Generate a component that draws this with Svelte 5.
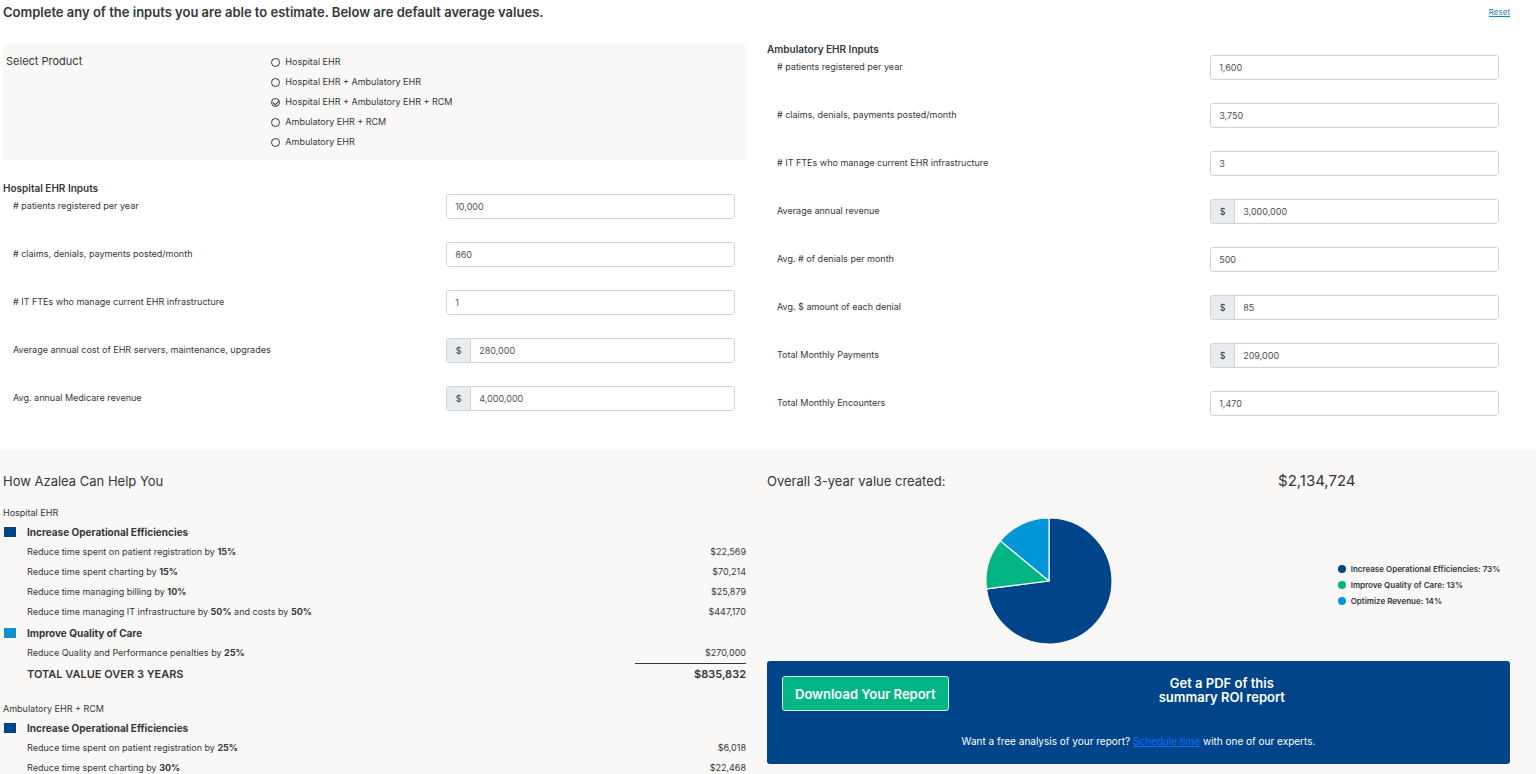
<script lang="ts">
	const products = [
		'Hospital EHR',
		'Hospital EHR + Ambulatory EHR',
		'Hospital EHR + Ambulatory EHR + RCM',
		'Ambulatory EHR + RCM',
		'Ambulatory EHR',
	];
	let product = $state(products[2]);

	const defaultHospital = [
		{ id: 'h-patients', label: '# patients registered per year', value: '10,000', money: false },
		{ id: 'h-claims', label: '# claims, denials, payments posted/month', value: '860', money: false },
		{ id: 'h-ftes', label: '# IT FTEs who manage current EHR infrastructure', value: '1', money: false },
		{ id: 'h-servers', label: 'Average annual cost of EHR servers, maintenance, upgrades', value: '280,000', money: true },
		{ id: 'h-medicare', label: 'Avg. annual Medicare revenue', value: '4,000,000', money: true },
	];
	const defaultAmbulatory = [
		{ id: 'a-patients', label: '# patients registered per year', value: '1,600', money: false },
		{ id: 'a-claims', label: '# claims, denials, payments posted/month', value: '3,750', money: false },
		{ id: 'a-ftes', label: '# IT FTEs who manage current EHR infrastructure', value: '3', money: false },
		{ id: 'a-revenue', label: 'Average annual revenue', value: '3,000,000', money: true },
		{ id: 'a-denials', label: 'Avg. # of denials per month', value: '500', money: false },
		{ id: 'a-denial-amount', label: 'Avg. $ amount of each denial', value: '85', money: true },
		{ id: 'a-payments', label: 'Total Monthly Payments', value: '209,000', money: true },
		{ id: 'a-encounters', label: 'Total Monthly Encounters', value: '1,470', money: false },
	];
	let hospital = $state(defaultHospital.map((f) => ({ ...f })));
	let ambulatory = $state(defaultAmbulatory.map((f) => ({ ...f })));

	function reset(e: Event) {
		e.preventDefault();
		product = products[2];
		hospital = defaultHospital.map((f) => ({ ...f }));
		ambulatory = defaultAmbulatory.map((f) => ({ ...f }));
	}

	// odd entries of `text` are the highlighted percentages
	const results = [
		{
			name: 'Hospital EHR',
			total: '$835,832',
			goals: [
				{
					name: 'Increase Operational Efficiencies', tone: 'navy',
					items: [
						{ text: ['Reduce time spent on patient registration by ', '15%'], amount: '$22,569' },
						{ text: ['Reduce time spent charting by ', '15%'], amount: '$70,214' },
						{ text: ['Reduce time managing billing by ', '10%'], amount: '$25,879' },
						{ text: ['Reduce time managing IT infrastructure by ', '50%', ' and costs by ', '50%'], amount: '$447,170' },
					],
				},
				{
					name: 'Improve Quality of Care', tone: 'sky',
					items: [
						{ text: ['Reduce Quality and Performance penalties by ', '25%'], amount: '$270,000' },
					],
				},
			],
		},
		{
			name: 'Ambulatory EHR + RCM',
			total: '',
			goals: [
				{
					name: 'Increase Operational Efficiencies', tone: 'navy',
					items: [
						{ text: ['Reduce time spent on patient registration by ', '25%'], amount: '$6,018' },
						{ text: ['Reduce time spent charting by ', '30%'], amount: '$22,468' },
					],
				},
			],
		},
	];

	const shares = [
		{ name: 'Increase Operational Efficiencies', pct: 73, color: '#004489' },
		{ name: 'Improve Quality of Care', pct: 13, color: '#02b684' },
		{ name: 'Optimize Revenue', pct: 14, color: '#0096d8' },
	];

	function point(pct: number) {
		const a = (pct / 100) * 2 * Math.PI;
		return `${64 + 63 * Math.sin(a)} ${64 - 63 * Math.cos(a)}`;
	}

	const slices = shares.map((s, i) => {
		const start = shares.slice(0, i).reduce((sum, x) => sum + x.pct, 0);
		const large = s.pct > 50 ? 1 : 0;
		return { color: s.color, d: `M64 64 L${point(start)} A63 63 0 ${large} 1 ${point(start + s.pct)} Z` };
	});
</script>

{#snippet field(f: any)}
	<div class="field">
		<label for={f.id}>{f.label}</label>
		<div class="control">
			{#if f.money}<span class="addon">$</span>{/if}
			<input id={f.id} type="text" bind:value={f.value} />
		</div>
	</div>
{/snippet}

<div class="roi">
	<header class="wrap">
		<h1>Complete any of the inputs you are able to estimate. Below are default average values.</h1>
		<a href="#reset" onclick={reset}>Reset</a>
	</header>

	<section class="wrap cols inputs">
		<div>
			<fieldset class="product" aria-labelledby="product-title">
				<div id="product-title" class="product-title">Select Product</div>
				<div class="options">
					{#each products as p (p)}
						<label><input type="radio" name="product" value={p} bind:group={product} />{p}</label>
					{/each}
				</div>
			</fieldset>
			<h2>Hospital EHR Inputs</h2>
			{#each hospital as f (f.id)}{@render field(f)}{/each}
		</div>
		<div>
			<h2>Ambulatory EHR Inputs</h2>
			{#each ambulatory as f (f.id)}{@render field(f)}{/each}
		</div>
	</section>

	<section class="summary">
		<div class="wrap cols">
			<div>
				<h3>How Azalea Can Help You</h3>
				{#each results as group (group.name)}
					<table>
						<caption>{group.name}</caption>
						<tbody>
							{#each group.goals as goal (goal.name)}
								<tr class="goal">
									<td class="mark"><span class="swatch {goal.tone}"></span></td>
									<th colspan="2" scope="colgroup">{goal.name}</th>
								</tr>
								{#each goal.items as item}
									<tr>
										<td></td>
										<td>{#each item.text as part, i}{#if i % 2}<b>{part}</b>{:else}{part}{/if}{/each}</td>
										<td class="amount">{item.amount}</td>
									</tr>
								{/each}
							{/each}
							{#if group.total}
								<tr class="total">
									<td></td>
									<th scope="row">TOTAL VALUE OVER 3 YEARS</th>
									<td class="amount">{group.total}</td>
								</tr>
							{/if}
						</tbody>
					</table>
				{/each}
			</div>

			<div>
				<div class="overall">
					<h3>Overall 3-year value created:</h3>
					<output>$2,134,724</output>
				</div>
				<div class="chart">
					<svg viewBox="0 0 128 128" role="img" aria-label="Value by goal">
						{#each slices as s}
							<path d={s.d} fill={s.color} stroke="#f9f8f6" stroke-width="1.2" stroke-linejoin="round" />
						{/each}
					</svg>
					<ul>
						{#each shares as s (s.name)}
							<li><i style="background: {s.color}"></i>{s.name}: {s.pct}%</li>
						{/each}
					</ul>
				</div>
				<div class="cta">
					<div class="cta-top">
						<button type="button">Download Your Report</button>
						<p>Get a PDF of this<br />summary ROI report</p>
					</div>
					<p class="expert">Want a free analysis of your report? <a href="#schedule">Schedule time</a> with one of our experts.</p>
				</div>
			</div>
		</div>
	</section>
</div>

<style>
	:global(body) { margin: 0; background: #fff; }
	.roi { font-family: Inter, "Open Sans", sans-serif; font-size: 9px; line-height: 12px; color: #33373b; }
	.roi * { box-sizing: border-box; }
	.wrap { padding: 0 26px 0 3px; }
	.cols { display: grid; grid-template-columns: 1fr 1fr; column-gap: 21px; }
	h1, h2, h3, p, ul { margin: 0; padding: 0; }

	header { display: flex; justify-content: space-between; align-items: center; height: 24px; }
	h1 { font-size: 13px; line-height: 20px; font-weight: 600; }
	header a { font-size: 8px; color: #1a7fc4; }
	.inputs { padding-top: 20px; padding-bottom: 11px; }

	.product { display: flex; margin: 0 0 22px; padding: 8px 3px; border: 0; background: #f9f8f6; }
	.product-title { width: 36%; font-size: 11px; line-height: 18px; }
	.options { flex: 1; }
	.options label { display: flex; align-items: center; gap: 5px; height: 20px; }
	.options input { appearance: none; position: relative; width: 9px; height: 9px; margin: 0; border: 1px solid #33373b; border-radius: 50%; }
	.options input:checked::after { content: ''; position: absolute; left: 2px; top: 0; width: 3px; height: 5px; border: solid #33373b; border-width: 0 1px 1px 0; transform: rotate(45deg); }

	h2 { font-size: 10px; line-height: 12px; font-weight: 600; }
	.inputs > div:last-child > h2 { margin-top: -1px; }
	.field { display: flex; justify-content: space-between; align-items: flex-start; padding: 0 11px 23px 10px; }
	.field label { line-height: 24px; }
	.control { display: flex; width: 40%; height: 25px; border: 1px solid #ced4da; border-radius: 3px; overflow: hidden; }
	.addon { width: 24px; line-height: 23px; text-align: center; background: #e9ecef; border-right: 1px solid #ced4da; }
	.control input { flex: 1; min-width: 0; padding: 0 8px; border: 0; outline: 0; background: #fff; color: #495057; font: inherit; }

	.summary { background: #f9f8f6; padding-top: 20px; }
	h3 { font-size: 13px; line-height: 22px; font-weight: 400; }
	table { width: 100%; border-collapse: collapse; margin-top: 13px; }
	table + table { margin-top: 17px; }
	caption { text-align: left; line-height: 16px; }
	td, th { padding: 4px 0; text-align: left; }
	.goal td, .goal th { padding: 0; height: 21px; }
	th { font-size: 10px; font-weight: 700; }
	.mark { width: 24px; }
	.swatch { display: block; width: 12px; height: 10px; margin-left: 1px; }
	.navy { background: #004489; }
	.sky { background: #0c93cf; }
	.amount { width: 15%; text-align: right; }
	.total th { font-size: 11px; font-weight: 600; }
	.total .amount { border-top: 1px solid #33373b; font-size: 11px; font-weight: 600; }
	table:last-child tr:last-child td { padding-bottom: 0; }

	.overall { display: grid; grid-template-columns: 48% 52%; align-items: center; }
	output { text-align: center; font-size: 15px; line-height: 22px; }
	.chart { display: grid; grid-template-columns: 76% 24%; align-items: center; padding-top: 25px; }
	.chart svg { width: 128px; height: 128px; justify-self: center; }
	.chart ul { list-style: none; padding: 8px 0 0 6px; font-size: 8px; font-weight: 600; }
	.chart li { display: flex; align-items: center; gap: 5px; height: 16px; white-space: nowrap; }
	.chart i { width: 8px; height: 8px; border-radius: 50%; }

	.cta { margin-top: 16px; padding: 15px 15px 16px; border-radius: 3px; background: #004489; color: #fff; }
	.cta-top { display: flex; align-items: flex-start; }
	.cta button { height: 35px; padding: 0 12px; border: 1px solid #d5f0e6; border-radius: 3px; background: #02b684; color: #fff; font: 600 13px Inter, sans-serif; }
	.cta-top p { flex: 1; text-align: center; font-size: 13px; line-height: 14px; font-weight: 600; }
	.expert { margin-top: 23px; text-align: center; font-size: 10px; line-height: 14px; }
	.expert a { color: #0d6efd; }
</style>
